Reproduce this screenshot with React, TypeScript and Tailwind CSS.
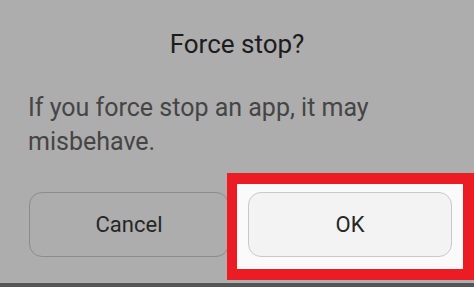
export default function App() {
  return (
    <div
      className="w-[474px] h-[287px] bg-[#adadad] flex flex-col overflow-hidden"
      style={{ fontFamily: "Roboto, 'Noto Sans', Arial, sans-serif" }}
    >
      <h1 className="pt-[29px] text-center text-[26px] leading-[30px] text-[#1c1c1c] font-normal">
        Force stop?
      </h1>

      <p className="mt-[32px] px-[28px] text-[25px] leading-[34px] text-[#454545]">
        If you force stop an app, it may misbehave.
      </p>

      <div className="mt-[14px] flex items-start">
        <button className="ml-[29px] mt-[19px] w-[200px] h-[65px] rounded-[13px] border border-[#8c8c8c] bg-[#adadad] text-[22px] text-[#262626]">
          Cancel
        </button>
        <div className="-ml-[2px] w-[247px] h-[107px] border-t-[11px] border-b-[11px] border-l-[10px] border-r-[11px] border-[#ec1c24] bg-[#fafafa] pt-[8px] px-[11px]">
          <button className="w-full h-[65px] rounded-[13px] border border-[#c9c9c9] bg-[#f3f3f3] text-[22px] text-[#262626]">
            OK
          </button>
        </div>
      </div>

      <div className="mt-[3px] h-[4px] bg-[#555555]" />
    </div>
  );
}
